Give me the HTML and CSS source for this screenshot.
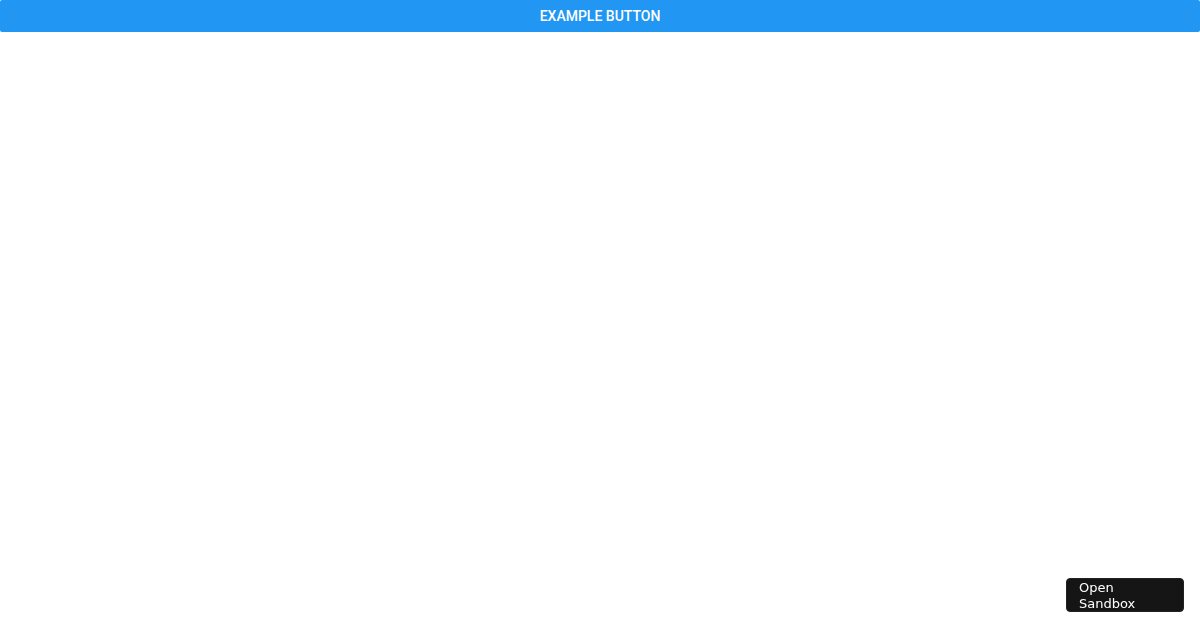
FILE: index.html
```html
<!DOCTYPE html>
<html lang="en">
<head>
<meta charset="utf-8">
<meta name="viewport" content="width=device-width, initial-scale=1">
<title>Example Button</title>
<link rel="stylesheet" href="styles.css">
</head>
<body>
<button class="button" type="button">Example Button</button>
<button class="open-sandbox" type="button">Open Sandbox</button>
</body>
</html>
```

FILE: styles.css
```css
body {
  margin: 0;
  background: #fff;
}

.button {
  display: block;
  width: 100%;
  height: 32px;
  padding: 0 8px;
  border: 0;
  border-radius: 2px;
  background: #2196f3;
  color: #fff;
  font: 500 14px/32px Roboto, sans-serif;
  text-align: center;
  text-transform: uppercase;
  cursor: pointer;
}

.open-sandbox {
  position: fixed;
  right: 16px;
  bottom: 18px;
  box-sizing: border-box;
  width: 118px;
  height: 34px;
  padding: 1px 12px 0;
  border: 1px solid #222;
  border-radius: 4px;
  background: #151515;
  color: #fff;
  font: 400 13px/16px "DejaVu Sans", sans-serif;
  text-align: left;
  cursor: pointer;
}
```
